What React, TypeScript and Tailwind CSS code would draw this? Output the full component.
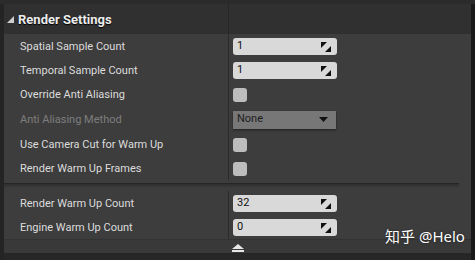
const ROWS_A = [
  { label: 'Spatial Sample Count', kind: 'num', value: '1' },
  { label: 'Temporal Sample Count', kind: 'num', value: '1' },
  { label: 'Override Anti Aliasing', kind: 'check' },
  { label: 'Anti Aliasing Method', kind: 'combo', value: 'None', disabled: true },
  { label: 'Use Camera Cut for Warm Up', kind: 'check' },
  { label: 'Render Warm Up Frames', kind: 'check' },
]

const ROWS_B = [
  { label: 'Render Warm Up Count', kind: 'num', value: '32' },
  { label: 'Engine Warm Up Count', kind: 'num', value: '0' },
]

type Row = { label: string; kind: string; value?: string; disabled?: boolean }

function SpinIcon() {
  return (
    <svg width="10" height="10" viewBox="0 0 10 10">
      <polygon points="0,0 6,0 0,6" fill="#111" />
      <polygon points="10,10 4,10 10,4" fill="#111" />
    </svg>
  )
}

function Value({ row }: { row: Row }) {
  if (row.kind === 'num') {
    return (
      <div className="flex h-[17px] w-[104px] items-center justify-between rounded-[3px] bg-[#d9d9d9] pl-1 pr-[6px] text-[11px] text-[#111]">
        <span>{row.value}</span>
        <SpinIcon />
      </div>
    )
  }
  if (row.kind === 'combo') {
    return (
      <div className="flex h-[18px] w-[103px] items-center justify-between bg-[#777777] pl-1 pr-2 text-[11px] text-[#1e1e1e] shadow-[0_1px_2px_rgba(0,0,0,0.5)]">
        <span>{row.value}</span>
        <svg width="9" height="5" viewBox="0 0 9 5">
          <polygon points="0,0 9,0 4.5,5" fill="#111" />
        </svg>
      </div>
    )
  }
  return <div className="h-[14px] w-[14px] rounded-[3px] bg-[#bdbdbd]" />
}

function PropRow({ row }: { row: Row }) {
  return (
    <div className={`flex items-center ${row.kind === 'combo' ? 'h-[26px]' : 'h-6'}`}>
      <div
        className={`w-[224px] pl-4 pt-[2px] text-[11px] ${row.disabled ? 'text-[#7d7d7d]' : 'text-[#dcdcdc]'}`}
      >
        {row.label}
      </div>
      <div className="flex h-full items-center border-l border-[#2a2a2a] pl-1 pt-[1px]">
        <Value row={row} />
      </div>
    </div>
  )
}

export default function App() {
  return (
    <div
      className="relative flex h-[260px] w-[475px] flex-col bg-[#242424]"
      style={{ fontFamily: 'Roboto, "Noto Sans", sans-serif' }}
    >
      <div className="h-[4px] bg-[#2b2b2b]" />
      <div className="flex flex-1 pl-1">
        <div className="flex flex-1 flex-col bg-[#3d3d3d]">
          <div className="flex h-[30px] items-center bg-[#303030]">
            <div className="flex w-[224px] items-center gap-[4px] pl-[3px] pt-[1px]">
              <svg width="7" height="7" viewBox="0 0 7 7">
                <polygon points="7,0 7,7 0,7" fill="#cfcfcf" />
              </svg>
              <span className="text-[13px] font-bold text-[#ececec] [text-shadow:0_1px_1px_#000]">
                Render Settings
              </span>
            </div>
            <div className="h-full border-l border-[#262626]" />
          </div>
          <div className="flex flex-col">
            {ROWS_A.map((r) => (
              <PropRow key={r.label} row={r} />
            ))}
          </div>
          <div className="mt-[3px] mr-[12px] h-[1px] bg-[#262626]" />
          <div className="mr-[12px] h-[4px] bg-gradient-to-b from-[#2e2e2e] to-[#3d3d3d]" />
          <div className="flex flex-col pt-[3px]">
            {ROWS_B.map((r) => (
              <PropRow key={r.label} row={r} />
            ))}
          </div>
          <div className="flex h-[14px] items-center justify-center border-t border-[#333] bg-[#393939] pt-[2px]">
            <svg width="12" height="8" viewBox="0 0 12 8">
              <polygon points="6,0 12,5 0,5" fill="#e6e6e6" />
              <rect x="0" y="6" width="12" height="2" fill="#e6e6e6" />
            </svg>
          </div>
          <div className="flex-1 bg-[#262626]" />
        </div>
        <div className="w-[4px] bg-[#191919]" />
      </div>
      <div
        className="pointer-events-none absolute left-[385px] top-[225px] text-[15px] text-white [text-shadow:0_0_2px_rgba(0,0,0,0.6)]"
        style={{ fontFamily: '"Noto Sans", "Noto Sans CJK SC", sans-serif' }}
      >
        知乎 @Helo
      </div>
    </div>
  )
}
